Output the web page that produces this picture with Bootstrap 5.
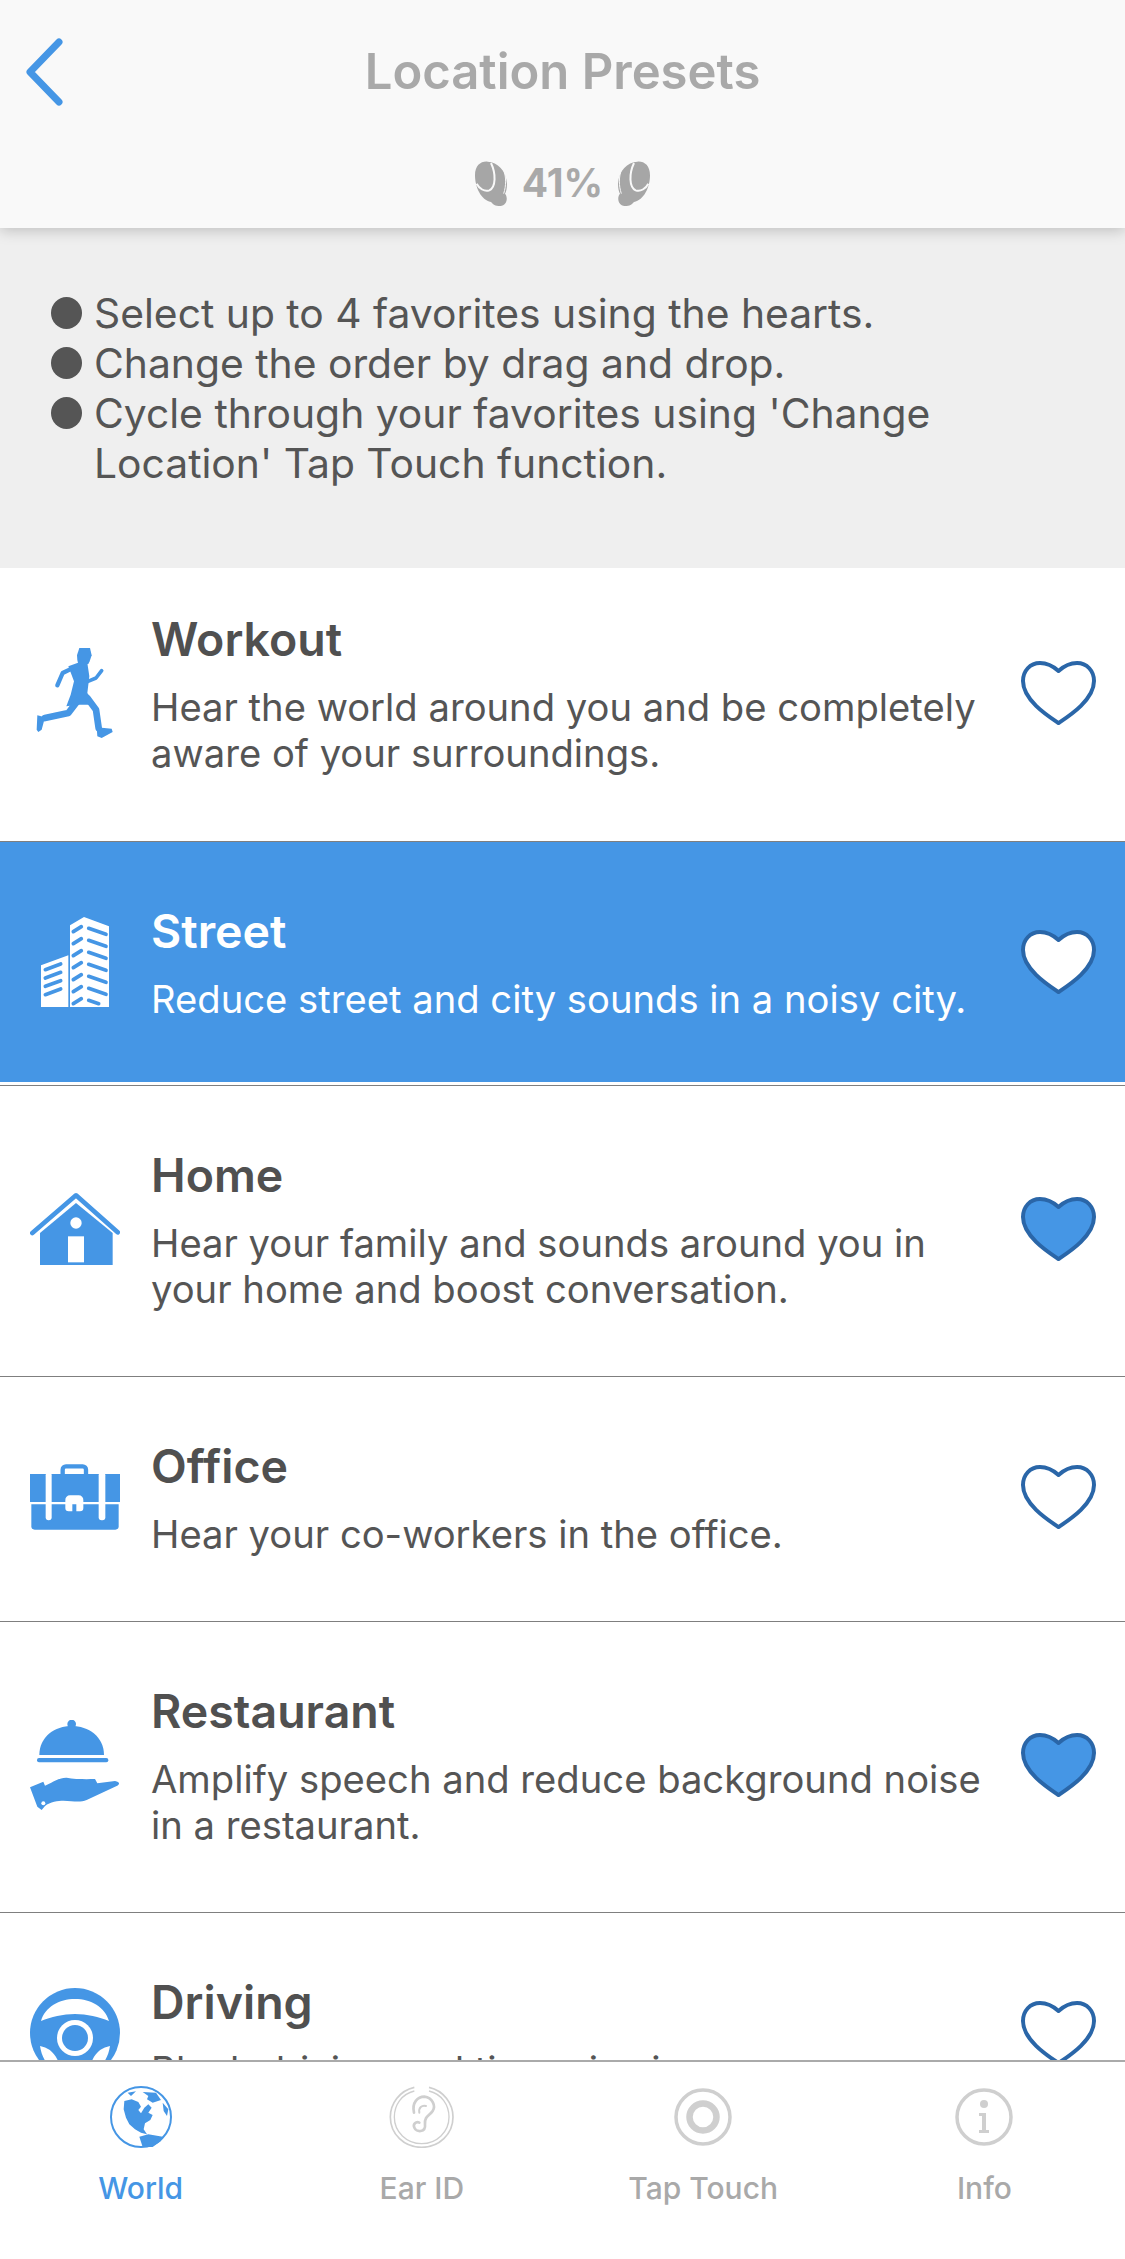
<!DOCTYPE html>
<html lang="en">
<head>
  <meta charset="UTF-8" />
  <meta name="viewport" content="width=device-width, initial-scale=1" />
  <title>Location Presets</title>
  <link href="https://cdn.jsdelivr.net/npm/bootstrap@5.3.3/dist/css/bootstrap.min.css" rel="stylesheet">
  <style>
    html, body { height: 100%; }
    body {
      background-color: #fff;
      font-family: "Inter", "Liberation Sans", sans-serif;
      color: #555;
    }
    .ap-shell { width: 1125px; height: 2259px; overflow: hidden; }
    .ap-header {
      height: 228px;
      flex: none;
      background-color: #f9f9f9;
      box-shadow: 0 2px 14px rgba(0, 0, 0, .22);
      position: relative;
      z-index: 2;
    }
    .ap-back { position: absolute; left: 22px; top: 38px; }
    .ap-title {
      color: #a9a9a9;
      font-size: 49px;
      font-weight: 600;
      line-height: 60px;
      padding-top: 42px;
      margin: 0;
    }
    .ap-battery {
      color: #a9a9a9;
      font-size: 39px;
      font-weight: 700;
      line-height: 46px;
      margin-top: 58px;
      gap: 14px;
    }
    .ap-info {
      height: 340px;
      flex: none;
      background-color: #efefef;
      padding: 60px 30px 0 51px;
      font-size: 40.800px;
      line-height: 50px;
      color: #555;
    }
    .ap-dot {
      width: 31px;
      height: 32px;
      background-color: #555;
      border-radius: 50%;
      margin: 9px 12px 0 0;
      flex: none;
    }
    .ap-list { flex: 1 1 auto; min-height: 0; overflow: hidden; }
    .ap-item {
      padding: 0;
      border-color: #7f7f7f;
      border-width: 0 0 2px;
    }
    .ap-item-inner { padding: 59px 0 64px; }
    .ap-item-first .ap-item-inner { padding: 41px 0 65px; }
    .ap-item-on { padding-bottom: 3px; }
    .ap-item-on .ap-item-inner { background-color: #4596e5; color: #fff; padding-bottom: 60px; }
    .ap-item-on .ap-name, .ap-item-on .ap-desc { color: #fff; }
    .ap-icon { width: 151px; flex: none; }
    .ap-icon svg { display: block; margin-left: 30px; }
    .ap-name {
      font-size: 46.500px;
      font-weight: 600;
      line-height: 60px;
      color: #505050;
      margin: 0 0 15px;
    }
    .ap-desc {
      font-size: 38.200px;
      line-height: 46px;
      color: #555;
      margin: 0;
    }
    .ap-heart { flex: none; margin: 0 28px 0 18px; }
    .ap-tabs {
      height: 199px;
      flex: none;
      background-color: #fff;
      border-top: 2px solid #aaa;
      position: relative;
    }
    .ap-tab {
      color: #a9a9a9;
      font-size: 30px;
      font-weight: 500;
      line-height: 36px;
      padding: 24px 0 0;
    }
    .ap-tab svg { display: block; margin: 0 auto 22px; }
    .ap-tab.active, .ap-tab.active:hover { color: #4596e5; }
    .ap-tab:hover { color: #a9a9a9; }
  </style>
</head>
<body>

<div class="ap-shell d-flex flex-column">

  <header class="ap-header text-center">
    <a href="#" class="ap-back" aria-label="Back">
      <svg width="42" height="70" viewBox="0 0 42 70"><path d="M37 4 8 34l29 30" fill="none" stroke="#4596e5" stroke-width="7" stroke-linecap="round" stroke-linejoin="round"/></svg>
    </a>
    <h1 class="ap-title">Location Presets</h1>
    <div class="ap-battery d-flex justify-content-center align-items-center">
      <svg width="34" height="45" viewBox="100 62 100 135"><path fill="#a6a6a6" d="M102 105c0-30 18-43 38-41 30 2 55 26 58 66 0 15-3 25-6 30 10 12 6 35-14 37-18 1-23-7-28-12-30-5-48-45-48-80z"/><path fill="none" stroke="#f9f9f9" stroke-width="6" d="M150 68c15 32 15 72-5 82-15 5-30-5-38-20"/><path fill="none" stroke="#f9f9f9" stroke-width="3" d="M187 85c9 25 9 50 1 75"/></svg>
      <span>41%</span>
      <svg width="34" height="45" viewBox="100 62 100 135"><g transform="translate(300 0) scale(-1 1)"><path fill="#a6a6a6" d="M102 105c0-30 18-43 38-41 30 2 55 26 58 66 0 15-3 25-6 30 10 12 6 35-14 37-18 1-23-7-28-12-30-5-48-45-48-80z"/><path fill="none" stroke="#f9f9f9" stroke-width="6" d="M150 68c15 32 15 72-5 82-15 5-30-5-38-20"/><path fill="none" stroke="#f9f9f9" stroke-width="3" d="M187 85c9 25 9 50 1 75"/></g></svg>
    </div>
  </header>

  <section class="ap-info">
    <div class="d-flex"><span class="ap-dot"></span><span>Select up to 4 favorites using the hearts.</span></div>
    <div class="d-flex"><span class="ap-dot"></span><span>Change the order by drag and drop.</span></div>
    <div class="d-flex"><span class="ap-dot"></span><span>Cycle through your favorites using 'Change Location' Tap Touch function.</span></div>
  </section>

  <div class="ap-list">
    <ul class="list-group list-group-flush">

      <li class="list-group-item ap-item ap-item-first">
        <div class="ap-item-inner d-flex align-items-center">
          <div class="ap-icon">
            <svg width="90" height="90" viewBox="90 150 270 270" fill="none" stroke="#4596e5" stroke-linecap="round" stroke-linejoin="round">
              <path fill="#4596e5" stroke="none" d="M238 150h32l5 22-6 18-4 8-30 2-3-14-1-14z"/>
              <path fill="#4596e5" stroke="none" d="M205 205l27-10 30 0 6 40-6 50 23 35-51 0-35 5 13-35 10-40z"/>
              <path stroke-width="11" d="M264 250l24-10 17-22"/>
              <path stroke-width="13" d="M215 212l-27 13-16 37"/>
              <path stroke-width="20" d="M232 310l-27 35-70 15"/>
              <path stroke-width="20" d="M262 300l26 35 8 55"/>
              <path fill="#4596e5" stroke="none" d="M112 352l23 6-10 37-10 7-5-7zM290 388l45 4 3 10-33 18-13-5z"/>
            </svg>
          </div>
          <div class="flex-grow-1">
            <h2 class="ap-name">Workout</h2>
            <p class="ap-desc">Hear the world around you and be completely aware of your surroundings.</p>
          </div>
          <svg class="ap-heart" width="77" height="66" viewBox="0 0 77 66"><path fill="#fff" stroke="#2a66a8" stroke-width="4" stroke-linejoin="round" d="M38.5 11C33 6 27 3 20 3 10 3 3 11 3 21c0 19 25 35 35.500 42C49 56 74 40 74 21c0-10-7-18-17-18-7 0-13 3-18.500 8z"/></svg>
        </div>
      </li>

      <li class="list-group-item ap-item ap-item-on">
        <div class="ap-item-inner d-flex align-items-center">
          <div class="ap-icon">
            <svg width="90" height="90" viewBox="90 950 270 270">
              <path fill="#fff" d="M210 975l42-25 75 28v242H210zM123 1095l82-30v155h-82z"/>
              <g stroke="#4596e5" stroke-width="11" stroke-linecap="round">
                <path d="M136 1108l46-17M136 1133l46-17M136 1158l46-17M136 1183l46-17"/>
                <path d="M220 994l24-15M220 1030l24-15M220 1066l24-15M220 1102l24-15M220 1138l24-15M220 1174l24-15M220 1210l24-15"/>
                <path d="M266 984l52 18M266 1020l52 18M266 1056l52 18M266 1092l52 18M266 1128l52 18M266 1164l52 18M266 1200l30 10"/>
              </g>
            </svg>
          </div>
          <div class="flex-grow-1">
            <h2 class="ap-name">Street</h2>
            <p class="ap-desc">Reduce street and city sounds in a noisy city.</p>
          </div>
          <svg class="ap-heart" width="77" height="66" viewBox="0 0 77 66"><path fill="#fff" stroke="#2a66a8" stroke-width="4" stroke-linejoin="round" d="M38.5 11C33 6 27 3 20 3 10 3 3 11 3 21c0 19 25 35 35.500 42C49 56 74 40 74 21c0-10-7-18-17-18-7 0-13 3-18.500 8z"/></svg>
        </div>
      </li>

      <li class="list-group-item ap-item">
        <div class="ap-item-inner d-flex align-items-center">
          <div class="ap-icon">
            <svg width="90" height="90" viewBox="90 135 270 270">
              <path d="M97 282l131-113 125 111" fill="none" stroke="#4596e5" stroke-width="14" stroke-linecap="round" stroke-linejoin="round"/>
              <path fill="#4596e5" d="M120 282l108-90 110 90v96H120z"/>
              <circle cx="228" cy="252" r="17" fill="#fff"/>
              <rect x="204" y="292" width="48" height="78" fill="#fff"/>
            </svg>
          </div>
          <div class="flex-grow-1">
            <h2 class="ap-name">Home</h2>
            <p class="ap-desc">Hear your family and sounds around you in your home and boost conversation.</p>
          </div>
          <svg class="ap-heart" width="77" height="66" viewBox="0 0 77 66"><path fill="#4596e5" stroke="#2a66a8" stroke-width="4" stroke-linejoin="round" d="M38.5 11C33 6 27 3 20 3 10 3 3 11 3 21c0 19 25 35 35.500 42C49 56 74 40 74 21c0-10-7-18-17-18-7 0-13 3-18.500 8z"/></svg>
        </div>
      </li>

      <li class="list-group-item ap-item">
        <div class="ap-item-inner d-flex align-items-center">
          <div class="ap-icon">
            <svg width="90" height="90" viewBox="90 935 270 270">
              <rect x="188" y="978" width="70" height="40" rx="10" fill="none" stroke="#4596e5" stroke-width="13"/>
              <rect x="90" y="1001" width="270" height="84" fill="#4596e5"/>
              <path fill="#4596e5" d="M94 1092h262v66a10 10 0 0 1-10 10H104a10 10 0 0 1-10-10z"/>
              <rect x="137" y="996" width="18" height="144" rx="9" fill="#fff"/>
              <rect x="296" y="996" width="20" height="144" rx="9" fill="#fff"/>
              <path fill="#fff" d="M196 1080a14 14 0 0 1 14-15h26a14 14 0 0 1 14 15v23a10 10 0 0 1-10 10h-11v-22h-12v22h-11a10 10 0 0 1-10-10z"/>
            </svg>
          </div>
          <div class="flex-grow-1">
            <h2 class="ap-name">Office</h2>
            <p class="ap-desc">Hear your co-workers in the office.</p>
          </div>
          <svg class="ap-heart" width="77" height="66" viewBox="0 0 77 66"><path fill="#fff" stroke="#2a66a8" stroke-width="4" stroke-linejoin="round" d="M38.5 11C33 6 27 3 20 3 10 3 3 11 3 21c0 19 25 35 35.500 42C49 56 74 40 74 21c0-10-7-18-17-18-7 0-13 3-18.500 8z"/></svg>
        </div>
      </li>

      <li class="list-group-item ap-item">
        <div class="ap-item-inner d-flex align-items-center">
          <div class="ap-icon">
            <svg width="90" height="90" viewBox="90 900 270 270">
              <circle cx="215" cy="912" r="13" fill="#4596e5"/>
              <path fill="#4596e5" d="M118 1005c0-55 47-87 97-87s97 32 97 87z"/>
              <rect x="111" y="1014" width="214" height="13" rx="6" fill="#4596e5"/>
              <path fill="#4596e5" d="M90 1102l40-17 5 12c20-7 40-25 65-24 25 5 60 5 85 4l7 13 53-7c13 2 17 9 5 15l-90 42c-20 8-40 3-70 2-15 0-40 3-55 16l-10 12-13-10z"/>
              <circle cx="130" cy="1150" r="6" fill="#fff"/>
            </svg>
          </div>
          <div class="flex-grow-1">
            <h2 class="ap-name">Restaurant</h2>
            <p class="ap-desc">Amplify speech and reduce background noise in a restaurant.</p>
          </div>
          <svg class="ap-heart" width="77" height="66" viewBox="0 0 77 66"><path fill="#4596e5" stroke="#2a66a8" stroke-width="4" stroke-linejoin="round" d="M38.5 11C33 6 27 3 20 3 10 3 3 11 3 21c0 19 25 35 35.500 42C49 56 74 40 74 21c0-10-7-18-17-18-7 0-13 3-18.500 8z"/></svg>
        </div>
      </li>

      <li class="list-group-item ap-item">
        <div class="ap-item-inner d-flex align-items-center">
          <div class="ap-icon">
            <svg width="90" height="90" viewBox="0 0 90 90">
              <circle cx="45" cy="45" r="45" fill="#4596e5"/>
              <path fill="#fff" d="M11 33C15 19 29 11 45 11s30 8 34 22c-10-4-22-7-34-7S21 29 11 33z"/>
              <path fill="#fff" d="M10 58c10 2 18 8 22 28C20 82 12 72 10 58zM80 58c-10 2-18 8-22 28 12-4 20-14 22-28z"/>
              <circle cx="45" cy="50" r="18" fill="#fff"/>
              <circle cx="45" cy="50" r="13" fill="#4596e5"/>
            </svg>
          </div>
          <div class="flex-grow-1">
            <h2 class="ap-name">Driving</h2>
            <p class="ap-desc">Block driving and tire noise in your car.</p>
          </div>
          <svg class="ap-heart" width="77" height="66" viewBox="0 0 77 66"><path fill="#fff" stroke="#2a66a8" stroke-width="4" stroke-linejoin="round" d="M38.5 11C33 6 27 3 20 3 10 3 3 11 3 21c0 19 25 35 35.500 42C49 56 74 40 74 21c0-10-7-18-17-18-7 0-13 3-18.500 8z"/></svg>
        </div>
      </li>

    </ul>
  </div>

  <nav class="ap-tabs nav nav-justified">
    <a class="nav-link ap-tab active" href="#">
      <svg width="62" height="62" viewBox="147 110 186 186">
        <circle cx="240" cy="203" r="90" fill="#fff" stroke="#4596e5" stroke-width="6"/>
        <path fill="#4596e5" d="M190 155l22-5 20 8 8 14-8 10 8 10 10-17 12-10 10 10-10 15 13 7-7 15-16 10-4 18 10 15-18-5-18-10-17-15-10-20-7-25zM245 128l40 2 15 22-25 8-17-10 4-10zM235 262l27-7 43 7-5 13-25 18-30 0zM305 160l17 20-4 20-10-15zM200 130l25-4-15 14z"/>
      </svg>
      World
    </a>
    <a class="nav-link ap-tab" href="#">
      <svg width="66" height="62" viewBox="990 110 196 186" fill="none" stroke="#cfcfcf">
        <path stroke-width="5" d="M1065 114c-45 10-72 50-72 89 0 52 42 91 94 91s94-39 94-91c0-39-27-79-72-89"/>
        <path stroke-width="4" d="M1065 125c-38 9-60 42-60 78 0 45 37 80 82 80s82-35 82-80c0-36-22-69-60-78"/>
        <path stroke-width="8" stroke-linecap="round" d="M1064 190c-7-30 11-48 31-48 25 3 35 28 25 43-10 15-25 15-23 40 3 25-27 25-32 10-5-10 5-20 15-15"/>
        <path stroke-width="6" stroke-linecap="round" d="M1080 190c-3-14 8-24 20-20"/>
      </svg>
      Ear ID
    </a>
    <a class="nav-link ap-tab" href="#">
      <svg width="62" height="62" viewBox="0 0 62 62" fill="none" stroke="#cfcfcf">
        <circle cx="31" cy="31" r="27" stroke-width="3.500"/>
        <circle cx="31" cy="31" r="13.500" stroke-width="6.500"/>
      </svg>
      Tap Touch
    </a>
    <a class="nav-link ap-tab" href="#">
      <svg width="62" height="62" viewBox="0 0 62 62">
        <circle cx="31" cy="31" r="27" fill="none" stroke="#cfcfcf" stroke-width="3.500"/>
        <circle cx="31" cy="18" r="4" fill="#cfcfcf"/>
        <path d="M26 27h7v17h3v3H26v-3h3V30h-3z" fill="#cfcfcf"/>
      </svg>
      Info
    </a>
  </nav>

</div>

<script src="https://cdn.jsdelivr.net/npm/bootstrap@5.3.3/dist/js/bootstrap.bundle.min.js"></script>
</body>
</html>
